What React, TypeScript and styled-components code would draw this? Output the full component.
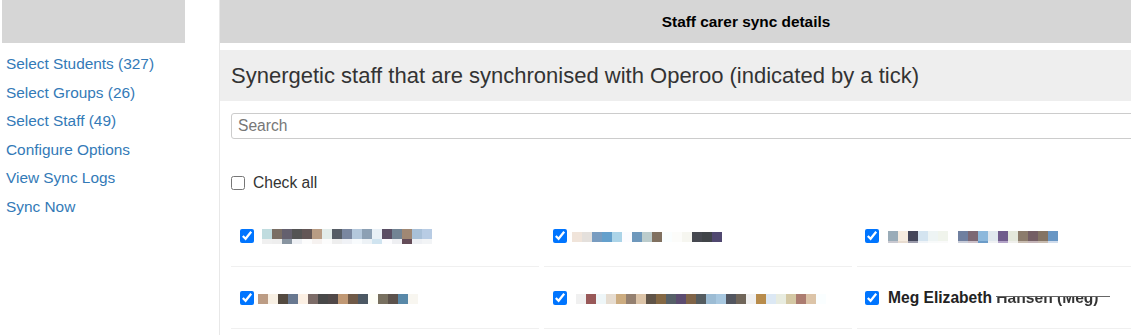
import styled, { createGlobalStyle } from "styled-components";

type Mosaic = {
  lead: number;
  rows: { h: number; colors: string[] }[];
};

type StaffItem = {
  mosaic?: Mosaic;
  name?: string;
  hidden?: string;
};

const GlobalStyle = createGlobalStyle`
  html, body {
    margin: 0;
    padding: 0;
    background: #ffffff;
    overflow: hidden;
  }
  body {
    font-family: "Liberation Sans", Arial, sans-serif;
    font-size: 15.4px;
    color: #333333;
  }
`;

const Page = styled.div`
  display: flex;
  align-items: flex-start;
  width: 1131px;
  height: 335px;
  overflow: hidden;
`;

const Sidebar = styled.aside`
  flex: none;
  width: 217px;
  padding-left: 2px;
  box-sizing: border-box;
  margin-right: 2px;
`;

const SidebarHead = styled.div`
  width: 183px;
  height: 43px;
  background: #d6d6d6;
`;

const NavList = styled.nav`
  display: flex;
  flex-direction: column;
  margin-top: 7px;
`;

const NavLink = styled.a`
  display: block;
  padding-left: 4px;
  line-height: 28.6px;
  font-size: 15.4px;
  color: #337ab7;
  text-decoration: none;
`;

const Main = styled.main`
  flex: none;
  width: 1052px;
  min-height: 335px;
  border-left: 1px solid #e8e8e8;
`;

const PanelHeader = styled.header`
  display: flex;
  align-items: center;
  justify-content: center;
  height: 43px;
  background: #d6d6d6;
  font-size: 15.4px;
  font-weight: bold;
  color: #000000;
`;

const TitleBar = styled.h2`
  display: flex;
  align-items: center;
  height: 51px;
  margin: 7px 0 0;
  padding: 0 11px;
  background: #eeeeee;
  font-size: 22px;
  font-weight: normal;
  color: #333333;
`;

const Body = styled.section`
  padding: 12px 11px 0;
`;

const SearchInput = styled.input`
  box-sizing: border-box;
  display: block;
  width: 100%;
  height: 26px;
  padding: 0 6px;
  border: 1px solid #cccccc;
  border-radius: 3px;
  font-family: "Liberation Sans", Arial, sans-serif;
  font-size: 15.6px;
  color: #333333;
  outline: none;

  &::placeholder {
    color: #777777;
  }
`;

const CheckAllRow = styled.label`
  display: flex;
  align-items: center;
  gap: 8px;
  margin-top: 36px;
  height: 16px;
  font-size: 15.6px;
  color: #333333;
`;

const Box = styled.input`
  flex: none;
  width: 14px;
  height: 14px;
  margin: 0;
`;

const Grid = styled.div`
  display: grid;
  grid-template-columns: repeat(3, 308px);
  column-gap: 5px;
  margin-top: 14px;
`;

const Cell = styled.div<{ $pad: number }>`
  display: flex;
  align-items: center;
  height: 61px;
  padding-left: ${({ $pad }) => $pad}px;
  border-bottom: 1px solid #f0f0f0;
`;

const MosaicWrap = styled.div<{ $lead: number }>`
  display: flex;
  flex-direction: column;
  margin-left: ${({ $lead }) => $lead}px;
  margin-top: 2px;
`;

const MosaicRow = styled.div<{ $h: number }>`
  display: flex;
  height: ${({ $h }) => $h}px;
`;

const Pixel = styled.span`
  width: 10px;
  height: 100%;
`;

const Name = styled.span`
  margin-left: 9px;
  font-size: 15.6px;
  font-weight: bold;
  color: #222222;
  white-space: nowrap;
`;

const CutName = styled.span`
  position: relative;
  background: linear-gradient(transparent 0 48%, #333333 48% 100%);
  -webkit-background-clip: text;
  background-clip: text;
  color: transparent;

  &::after {
    content: "";
    position: absolute;
    left: 0;
    right: -11px;
    top: 46%;
    height: 1px;
    background: #666666;
  }
`;

const navItems = [
  "Select Students (327)",
  "Select Groups (26)",
  "Select Staff (49)",
  "Configure Options",
  "View Sync Logs",
  "Sync Now",
];

const staff: StaffItem[] = [
  {
    mosaic: {
      lead: 8,
      rows: [
        {
          h: 10,
          colors: ["#c0dcdf", "#7a6e64", "#64606e", "#545454", "#635656", "#b89c84", "#e2ecea", "#565d66", "#7a87a0", "#b4c8dc", "#8ca0b4", "#e8f0f6", "#5a4e64", "#728494", "#a08874", "#a8c0d8", "#b8cce4"],
        },
        {
          h: 5,
          colors: ["#f0f0f0", "#eeeeee", "#8894a0", "#eef0f4", "#fcfcfc", "#f6f2f0", "#fcfcfc", "#eeeeee", "#f0f2f6", "#f8fbfd", "#edf2f6", "#d0e4f0", "#fcfcfe", "#eeeff2", "#644c58", "#eef0f4", "#f2f4f6"],
        },
      ],
    },
  },
  {
    mosaic: {
      lead: 5,
      rows: [
        {
          h: 10,
          colors: ["#f0e4da", "#e4e0dc", "#789cc0", "#64a0cc", "#acd4e8", "#fcfcff", "#6e98bc", "#bccccc", "#807060", "#fafeff", "#fcfcfa", "#f6f6f0", "#464850", "#404448", "#504870"],
        },
      ],
    },
  },
  {
    mosaic: {
      lead: 9,
      rows: [
        {
          h: 10,
          colors: ["#9aacb8", "#f6ece0", "#44465a", "#d4e4f0", "#eef4f4", "#f0f4ec", "#ffffff", "#7080a0", "#7c6874", "#8cb8dc", "#e0e8ee", "#705c8c", "#e4e8dc", "#8c7c6c", "#745e64", "#847464", "#6896c4"],
        },
        {
          h: 2,
          colors: ["#c8c8d0", "#e8dcd0", "#9c9cac", "#f0f4f8", "#f8fafa", "#fafafa", "#ffffff", "#c8ccd8", "#ccc0c8", "#6c9cc8", "#f0f2f4", "#b4a4c8", "#f0f0ec", "#c8bcb0", "#c4b4b8", "#c8bcb0", "#d0dcec"],
        },
      ],
    },
  },
  {
    mosaic: {
      lead: 4,
      rows: [
        {
          h: 10,
          colors: ["#bc9c84", "#f8f0e4", "#544a40", "#687890", "#fcf0e4", "#7c6c68", "#484848", "#504848", "#c09874", "#705a48", "#4c5864", "#fefef8", "#787060", "#5c524c", "#5888a8", "#f8f6f0"],
        },
      ],
    },
  },
  {
    mosaic: {
      lead: 9,
      rows: [
        {
          h: 10,
          colors: ["#f0f0f0", "#985858", "#eef6f8", "#e6dcd0", "#ccac80", "#948070", "#dcc4a8", "#605448", "#846844", "#566068", "#5c4c70", "#806448", "#545c60", "#9cbcd4", "#a8c8e0", "#525660", "#70665a", "#f0f0f0", "#b88c4c", "#dce8f4", "#e8ece0", "#d4c8a4", "#ac7c70", "#dcc4a8", "#fafeff"],
        },
      ],
    },
  },
  { name: "Meg Elizabeth", hidden: "Hansen (Meg)" },
];

export default function App() {
  return (
    <>
      <GlobalStyle />
      <Page>
        <Sidebar>
          <SidebarHead />
          <NavList>
            {navItems.map((label) => (
              <NavLink key={label} href="#">
                {label}
              </NavLink>
            ))}
          </NavList>
        </Sidebar>

        <Main>
          <PanelHeader>Staff carer sync details</PanelHeader>
          <TitleBar>
            Synergetic staff that are synchronised with Operoo (indicated by a tick)
          </TitleBar>
          <Body>
            <SearchInput type="text" placeholder="Search" />
            <CheckAllRow>
              <Box type="checkbox" />
              Check all
            </CheckAllRow>
            <Grid>
              {staff.map((item, i) => (
                <Cell key={i} $pad={i % 3 === 2 ? 8 : 9}>
                  <Box type="checkbox" defaultChecked />
                  {item.mosaic && (
                    <MosaicWrap $lead={item.mosaic.lead}>
                      {item.mosaic.rows.map((row, r) => (
                        <MosaicRow key={r} $h={row.h}>
                          {row.colors.map((c, k) => (
                            <Pixel key={k} style={{ background: c }} />
                          ))}
                        </MosaicRow>
                      ))}
                    </MosaicWrap>
                  )}
                  {item.name && (
                    <Name>
                      {item.name} <CutName>{item.hidden}</CutName>
                    </Name>
                  )}
                </Cell>
              ))}
            </Grid>
          </Body>
        </Main>
      </Page>
    </>
  );
}
